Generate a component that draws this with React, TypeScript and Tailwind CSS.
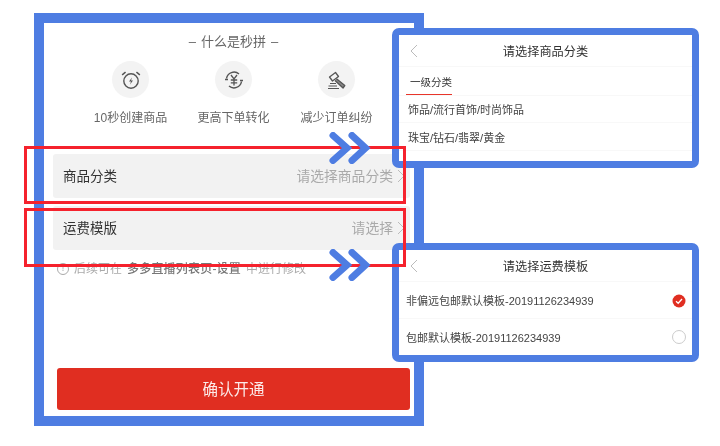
const font = { fontFamily: '"Liberation Sans", "Noto Sans CJK SC", sans-serif' };

function ClockIcon() {
  return (
    <svg width="20" height="20" viewBox="0 0 20 20" fill="none" stroke="#555" strokeWidth="1.4">
      <circle cx="10" cy="11" r="7.200" />
      <path d="M1.500 4.600 4.200 2.400M18.500 4.600 15.800 2.400" strokeLinecap="round" />
      <path d="M11 7.600 8 11.600h2l-1 2.800 3-4h-2z" fill="#555" stroke="none" />
    </svg>
  );
}

function YenIcon() {
  return (
    <svg width="20" height="20" viewBox="0 0 20 20" fill="none" stroke="#555" strokeWidth="1.400">
      <path d="M2.500 8.500A7.600 7.600 0 0 1 15 4" />
      <path d="M17.500 11.500A7.600 7.600 0 0 1 5 16" />
      <path d="M1 9.500h3M16 10.500h3" strokeWidth="1.600" />
      <path d="M7 5l3 4 3-4M6.800 10h6.400M6.800 12.800h6.400M10 9v6.500" strokeWidth="1.300" />
    </svg>
  );
}

function GavelIcon() {
  return (
    <svg width="20" height="20" viewBox="0 0 20 20" fill="none" stroke="#555" strokeWidth="1.300">
      <path d="M2.500 7 8.500 2.500l3 4-6 4.500z" strokeLinejoin="round" />
      <path d="M9.500 8.800 17.800 15.500 16 18 8 10.500" strokeLinejoin="round" fill="#888" />
      <path d="M3 13.500h6M1.500 16h8.500M1 18.500h11" strokeWidth="1.100" />
    </svg>
  );
}

function Chevron({ left, className }: { left?: boolean; className: string }) {
  return (
    <svg width="8" height="14" viewBox="0 0 8 14" fill="none" stroke="currentColor" strokeWidth="1" className={className}>
      <path d={left ? 'M7 1 1 7l6 6' : 'M1 1l6 6-6 6'} />
    </svg>
  );
}

function DoubleArrow({ className }: { className: string }) {
  return (
    <svg width="42" height="32" viewBox="0 0 42 32" fill="none" stroke="#4e7de2" strokeWidth="7" className={className}>
      <path d="M4 3.500 18 16 4 28.500" strokeLinecap="round" />
      <path d="M23 3.500 36.500 16 23 28.500" strokeLinecap="round" />
    </svg>
  );
}

const features = [
  { label: '10秒创建商品', icon: <ClockIcon /> },
  { label: '更高下单转化', icon: <YenIcon /> },
  { label: '减少订单纠纷', icon: <GavelIcon /> },
];

function SelectRow({ title, hint }: { title: string; hint: string }) {
  return (
    <div className="flex h-[44px] items-center justify-between rounded-[3px] bg-[#f2f2f2] pl-[10px] pr-[5px]">
      <span className="pt-[2px] text-[13.500px] text-[#333]">{title}</span>
      <span className="flex items-center gap-[4px] text-[13.800px] text-[#aaa]">
        <span className="pt-[2px]">{hint}</span>
        <Chevron className="text-[#bbb]" />
      </span>
    </div>
  );
}

function Panel({ title, className, children }: { title: string; className: string; children: React.ReactNode }) {
  return (
    <div className={`absolute left-[392px] w-[307px] rounded-[7px] border-[7px] border-[#4e7de2] bg-white ${className}`}>
      <div className="relative flex h-[32px] items-center justify-center border-b border-[#f8f8f8] pt-[3px] text-[12.200px] text-[#333]">
        <Chevron left className="absolute left-[11px] top-[9px] text-[#bbb]" />
        {title}
      </div>
      {children}
    </div>
  );
}

export default function App() {
  return (
    <div className="relative h-[446px] w-[720px] overflow-hidden bg-white pl-[34px] pt-[13px] blur-[0.35px]" style={font}>
      <div className="flex h-[413px] w-[390px] flex-col border-[10px] border-[#4e7de2] bg-white">
        <div className="flex justify-center gap-[5px] pl-[9px] pt-[10px] text-[13px] leading-[18px] text-[#666]">
          <span>–</span>
          <span>什么是秒拼</span>
          <span>–</span>
        </div>
        <div className="mt-[10px] flex justify-center gap-[31px] pl-[9px]">
          {features.map((f) => (
            <div key={f.label} className="flex w-[72px] flex-col items-center">
              <div className="flex h-[37px] w-[37px] items-center justify-center rounded-full bg-[#f3f3f3]">{f.icon}</div>
              <span className="mt-[11px] text-[12px] leading-[18px] whitespace-nowrap text-[#666]">{f.label}</span>
            </div>
          ))}
        </div>
        <div className="mt-[27px] flex w-[357px] flex-col gap-[8px] pl-[9px] box-content">
          <SelectRow title="商品分类" hint="请选择商品分类" />
          <SelectRow title="运费模版" hint="请选择" />
        </div>
        <div className="mt-[9px] flex items-center gap-[5px] pl-[13px] text-[12px] leading-[18px] text-[#aaa]">
          <span className="flex h-[12px] w-[12px] items-center justify-center rounded-full border border-[#aaa] text-[9px] leading-none">!</span>
          <span className="pt-[1px]">后续可在</span>
          <span className="pt-[1px] font-medium tracking-[0.2px] text-[#777]">多多直播列表页-设置</span>
          <span className="pt-[1px]">中进行修改</span>
        </div>
        <div className="mt-auto mb-[6px] ml-[13px] flex h-[42px] w-[353px] items-center justify-center rounded-[3px] bg-[#e02e21] pt-[2px] text-[15.500px] text-white/90">
          确认开通
        </div>
      </div>

      {/* overlays */}
      <Panel title="请选择商品分类" className="top-[28px] h-[140px]">
        <div className="relative h-[29px] border-b border-[#f8f8f8] pl-[11px] pt-[7px] text-[10.500px] leading-[16px] text-[#333]">
          一级分类
          <div className="absolute bottom-[0px] left-[7px] h-[1px] w-[46px] bg-[#e8352a]" />
        </div>
        <div className="flex h-[27px] items-center border-b border-[#f8f8f8] pl-[9px] pt-[3px] text-[11px] text-[#444]">饰品/流行首饰/时尚饰品</div>
        <div className="flex h-[28px] items-center border-b border-[#f8f8f8] pl-[9px] pt-[3px] text-[11px] text-[#444]">珠宝/钻石/翡翠/黄金</div>
      </Panel>
      <Panel title="请选择运费模板" className="top-[243px] h-[119px]">
        <div className="flex h-[37px] items-center justify-between border-b border-[#f8f8f8] pl-[7px] pr-[6px] text-[11px] text-[#444]">
          <span className="pt-[2px]">非偏远包邮默认模板-20191126234939</span>
          <svg width="14" height="14" viewBox="0 0 14 14" className="mt-[1px]">
            <circle cx="7" cy="7" r="6.500" fill="#e02e21" />
            <path d="M4 7.200 6.200 9.300 10 5" fill="none" stroke="#fff" strokeWidth="1.300" />
          </svg>
        </div>
        <div className="flex h-[36px] items-center justify-between pl-[7px] pr-[6px] text-[11px] text-[#444]">
          <span className="pt-[2px]">包邮默认模板-20191126234939</span>
          <span className="h-[14px] w-[14px] rounded-full border border-[#ccc]" />
        </div>
      </Panel>

      <div className="absolute left-[24px] top-[146px] h-[58px] w-[382px] border-[3px] border-[#f5222d]" />
      <div className="absolute left-[24px] top-[208px] h-[59px] w-[382px] border-[3px] border-[#f5222d]" />
      <DoubleArrow className="absolute left-[329px] top-[132px]" />
      <DoubleArrow className="absolute left-[329px] top-[249px]" />
    </div>
  );
}
